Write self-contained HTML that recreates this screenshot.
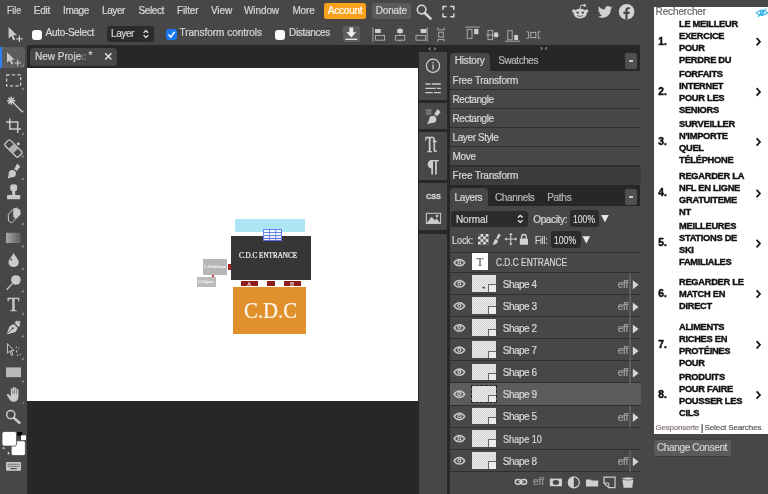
<!DOCTYPE html>
<html><head><meta charset="utf-8">
<style>
*{box-sizing:border-box;margin:0;padding:0}
html,body{width:768px;height:494px;overflow:hidden;background:#474747}
body{position:relative;font-family:"Liberation Sans","DejaVu Sans",sans-serif;font-size:10px;color:#d6d6d6}
.a{position:absolute}
.t{position:absolute;white-space:nowrap;line-height:14px;-webkit-text-stroke:.22px currentColor}
.sep{position:absolute;left:449.5px;width:190.5px;height:1.2px;background:#2e2e2e}
.th{position:absolute;left:472px;width:24px;height:16.6px;background:#e9e9e9;background-image:linear-gradient(45deg,#d4d4d4 25%,transparent 25%,transparent 75%,#d4d4d4 75%),linear-gradient(45deg,#d4d4d4 25%,transparent 25%,transparent 75%,#d4d4d4 75%);background-size:2px 2px;background-position:0 0,1px 1px}
.vm{position:absolute;left:488.3px;width:7.6px;height:7.4px;background:#ececec;border-left:1px solid #666;border-top:1px solid #666}
.in{position:absolute;background:#2b2b2b;border-radius:3px}
</style></head><body>

<!-- workspace dark bg -->
<div class="a" style="left:27px;top:45px;width:613.4px;height:449px;background:#272727;border-radius:3px 0 0 0"></div>
<!-- canvas -->
<div class="a" style="left:27px;top:67.6px;width:391.3px;height:333px;background:#fff"></div>

<!-- canvas artwork -->
<div class="a" style="left:235px;top:218.8px;width:70.2px;height:13px;background:#aee5f4"></div>
<div class="a" style="left:230.8px;top:235.5px;width:80.4px;height:44.6px;background:#363636"></div>
<div class="a" style="left:263px;top:229.2px;width:18.6px;height:12px;background:#fff;background-image:linear-gradient(#5b78f0 1px,transparent 1px),linear-gradient(90deg,#5b78f0 1px,transparent 1px);background-size:6.2px 3px;border-right:1px solid #5b78f0;border-bottom:1px solid #5b78f0;opacity:.92"></div>
<div class="a" style="left:202.7px;top:258.8px;width:24.8px;height:15.8px;background:#b6b6b6"></div>
<div class="a" style="left:228.2px;top:263.5px;width:2.6px;height:6px;background:#a02020"></div>
<div class="a" style="left:212px;top:275.3px;width:2.4px;height:1.4px;background:#c04040"></div>
<div class="a" style="left:196.5px;top:277px;width:19px;height:9.5px;background:#bcbcbc"></div>
<div class="a" style="left:241px;top:280.8px;width:16.6px;height:5.6px;background:#8e1b1b"></div>
<div class="a" style="left:266.8px;top:280.8px;width:7.8px;height:5.6px;background:#8e1b1b"></div>
<div class="a" style="left:283.5px;top:280.8px;width:17px;height:5.6px;background:#8e1b1b"></div>
<div class="a" style="left:232.5px;top:287.2px;width:73.5px;height:46.6px;background:#e0912c"></div>

<!-- menu buttons -->
<div class="a" style="left:324px;top:2.6px;width:42.4px;height:16.6px;background:#f9a11b;border-radius:2.5px"></div>
<div class="a" style="left:372px;top:2.6px;width:39px;height:16.6px;background:#5b5b5b;border-radius:2.5px"></div>

<!-- options bar -->
<div class="a" style="left:32px;top:30px;width:10px;height:10px;background:#fbfbfb;border-radius:3px"></div>
<div class="in" style="left:106.5px;top:26px;width:47.5px;height:16px"></div>
<div class="a" style="left:166px;top:29px;width:11px;height:11px;background:#1877f2;border-radius:3px"></div>
<div class="a" style="left:275.4px;top:30px;width:10px;height:10px;background:#fbfbfb;border-radius:3px"></div>
<div class="a" style="left:343px;top:25.6px;width:16.5px;height:16.2px;background:#5d5d5d;border-radius:2px"></div>

<!-- active tool -->
<div class="a" style="left:0;top:46.8px;width:24.7px;height:21px;background:#5c5c5c;border-radius:0 4px 4px 0"></div>
<div class="a" style="left:0;top:46.8px;width:2.1px;height:21px;background:#2d7ff9"></div>

<!-- doc tab -->
<div class="a" style="left:29.8px;top:47.6px;width:87.5px;height:18.8px;background:#474747;border-radius:3.5px"></div>

<!-- icon column -->
<div class="a" style="left:419.3px;top:51.8px;width:27.6px;height:48.5px;background:#474747"></div>
<div class="a" style="left:419.3px;top:103.2px;width:27.6px;height:26.2px;background:#474747"></div>
<div class="a" style="left:419.3px;top:132px;width:27.6px;height:47.5px;background:#474747"></div>
<div class="a" style="left:419.3px;top:182.7px;width:27.6px;height:47.8px;background:#474747"></div>
<div class="a" style="left:419.3px;top:233.6px;width:27.6px;height:261px;background:#474747"></div>

<!-- history panel -->
<div class="a" style="left:449.6px;top:52.5px;width:40.6px;height:19px;background:#474747;border-radius:4px 4px 0 0"></div>
<div class="a" style="left:449.6px;top:70.8px;width:191.4px;height:114.4px;background:#474747"></div>
<div class="a" style="left:449.6px;top:166.4px;width:191.4px;height:18.8px;background:#3c3c3c"></div>
<div class="a" style="left:625px;top:53px;width:12px;height:16.2px;background:#505050;border-radius:2px"></div>
<div class="a" style="left:629.3px;top:59.8px;width:3.6px;height:2.2px;background:#c8c8c8"></div>
<div class="sep" style="top:89px"></div><div class="sep" style="top:108.1px"></div><div class="sep" style="top:127.2px"></div><div class="sep" style="top:146.3px"></div><div class="sep" style="top:165.4px"></div>

<!-- layers panel -->
<div class="a" style="left:449.6px;top:188px;width:38px;height:19px;background:#474747;border-radius:4px 4px 0 0"></div>
<div class="a" style="left:449.6px;top:206px;width:191.4px;height:288px;background:#474747"></div>
<div class="a" style="left:625px;top:189px;width:12px;height:16.2px;background:#505050;border-radius:2px"></div>
<div class="a" style="left:629.3px;top:195.8px;width:3.6px;height:2.2px;background:#c8c8c8"></div>
<div class="in" style="left:451.2px;top:210.6px;width:77px;height:16.4px"></div>
<div class="in" style="left:569.7px;top:210.4px;width:29.3px;height:16.8px"></div>
<div class="in" style="left:551px;top:230.8px;width:30px;height:17.3px"></div>
<!-- selected row -->
<div class="a" style="left:449.6px;top:383.4px;width:191.4px;height:21.6px;background:#5c5c5c"></div>
<!-- row separators -->
<div class="sep" style="top:251.6px"></div><div class="sep" style="top:271.8px"></div><div class="sep" style="top:293.9px"></div><div class="sep" style="top:316px"></div><div class="sep" style="top:338.1px"></div><div class="sep" style="top:360.2px"></div><div class="sep" style="top:382.3px"></div><div class="sep" style="top:404.8px"></div><div class="sep" style="top:426.6px"></div><div class="sep" style="top:448.8px"></div><div class="sep" style="top:470.9px"></div>
<!-- thumbs -->
<div class="a" style="left:472px;top:253px;width:16.2px;height:16.8px;background:#fff"></div>
<div class="th" style="top:275.2px"></div><div class="vm" style="top:284.4px"></div>
<div class="th" style="top:297.2px"></div><div class="vm" style="top:306.4px"></div>
<div class="th" style="top:319.3px"></div><div class="vm" style="top:328.5px"></div>
<div class="th" style="top:341.4px"></div><div class="vm" style="top:350.6px"></div>
<div class="th" style="top:363.5px"></div><div class="vm" style="top:372.7px"></div>
<div class="th" style="top:385.7px;outline:1px dashed #222;outline-offset:0"></div><div class="vm" style="top:394.9px"></div>
<div class="th" style="top:407.8px"></div><div class="vm" style="top:417px"></div>
<div class="th" style="top:430px"></div><div class="vm" style="top:439.2px"></div>
<div class="th" style="top:452.2px"></div><div class="vm" style="top:461.4px"></div>

<!-- ad -->
<div class="a" style="left:654.4px;top:7px;width:114px;height:426.6px;background:#fff"></div>
<div class="a" style="left:653.5px;top:440px;width:77.3px;height:15.8px;background:#5b5b5b;border-radius:2.5px;box-shadow:0 1px 0 #3b3b3b,0 -1px 0 #404040"></div>

<div class="a" style="left:0;top:0;width:768px;height:494px;will-change:transform">
<div class="t" style='left:6.7px;top:3.6px;font-size:10px;line-height:14px;color:#d6d6d6;transform-origin:0 50%;transform:scaleX(0.874);'>File</div>
<div class="t" style='left:33.7px;top:3.6px;font-size:10px;line-height:14px;color:#d6d6d6;letter-spacing:-0.23px;'>Edit</div>
<div class="t" style='left:63.0px;top:3.6px;font-size:10px;line-height:14px;color:#d6d6d6;letter-spacing:-0.36px;'>Image</div>
<div class="t" style='left:102.0px;top:3.6px;font-size:10px;line-height:14px;color:#d6d6d6;letter-spacing:-0.40px;'>Layer</div>
<div class="t" style='left:138.5px;top:3.6px;font-size:10px;line-height:14px;color:#d6d6d6;letter-spacing:-0.38px;'>Select</div>
<div class="t" style='left:177.0px;top:3.6px;font-size:10px;line-height:14px;color:#d6d6d6;letter-spacing:-0.12px;'>Filter</div>
<div class="t" style='left:211.0px;top:3.6px;font-size:10px;line-height:14px;color:#d6d6d6;letter-spacing:-0.12px;'>View</div>
<div class="t" style='left:244.0px;top:3.6px;font-size:10px;line-height:14px;color:#d6d6d6;letter-spacing:-0.10px;'>Window</div>
<div class="t" style='left:292.4px;top:3.6px;font-size:10px;line-height:14px;color:#d6d6d6;letter-spacing:-0.15px;'>More</div>
<div class="t" style='left:327.8px;top:3.6px;font-size:10px;line-height:14px;color:#ffffff;letter-spacing:-0.22px;'>Account</div>
<div class="t" style='left:375.7px;top:3.6px;font-size:10px;line-height:14px;color:#d6d6d6;letter-spacing:-0.16px;'>Donate</div>
<div class="t" style='left:45.5px;top:26.0px;font-size:10px;line-height:14px;color:#d6d6d6;letter-spacing:-0.29px;'>Auto-Select</div>
<div class="t" style='left:111.0px;top:27.0px;font-size:10px;line-height:14px;color:#d6d6d6;letter-spacing:-0.40px;'>Layer</div>
<div class="t" style='left:179.5px;top:26.0px;font-size:10px;line-height:14px;color:#d6d6d6;letter-spacing:-0.03px;'>Transform controls</div>
<div class="t" style='left:289.0px;top:26.0px;font-size:10px;line-height:14px;color:#d6d6d6;letter-spacing:-0.32px;'>Distances</div>
<div class="t" style='left:35.0px;top:49.5px;font-size:10px;line-height:14px;color:#d6d6d6;letter-spacing:0.01px;'>New Proje</div>
<div class="t" style='left:81.2px;top:49.5px;font-size:10px;line-height:14px;color:#7c7c7c;letter-spacing:-0.20px;'>c</div>
<div class="t" style='left:88.5px;top:48.5px;font-size:10px;line-height:14px;color:#d6d6d6;letter-spacing:0.09px;'>*</div>
<div class="t" style='left:454.7px;top:54.4px;font-size:10px;line-height:14px;color:#d6d6d6;letter-spacing:-0.16px;'>History</div>
<div class="t" style='left:498.3px;top:54.4px;font-size:10px;line-height:14px;color:#b4b4b4;letter-spacing:-0.46px;'>Swatches</div>
<div class="t" style='left:452.5px;top:73.8px;font-size:10px;line-height:14px;color:#d6d6d6;letter-spacing:-0.20px;'>Free Transform</div>
<div class="t" style='left:452.5px;top:92.9px;font-size:10px;line-height:14px;color:#d6d6d6;letter-spacing:-0.43px;'>Rectangle</div>
<div class="t" style='left:452.5px;top:112.0px;font-size:10px;line-height:14px;color:#d6d6d6;letter-spacing:-0.43px;'>Rectangle</div>
<div class="t" style='left:452.5px;top:131.1px;font-size:10px;line-height:14px;color:#d6d6d6;letter-spacing:-0.38px;'>Layer Style</div>
<div class="t" style='left:452.5px;top:150.0px;font-size:10px;line-height:14px;color:#d6d6d6;letter-spacing:-0.29px;'>Move</div>
<div class="t" style='left:452.5px;top:169.3px;font-size:10px;line-height:14px;color:#d6d6d6;letter-spacing:-0.20px;'>Free Transform</div>
<div class="t" style='left:454.6px;top:190.5px;font-size:10px;line-height:14px;color:#d6d6d6;letter-spacing:-0.40px;'>Layers</div>
<div class="t" style='left:495.0px;top:190.5px;font-size:10px;line-height:14px;color:#b4b4b4;letter-spacing:-0.35px;'>Channels</div>
<div class="t" style='left:547.2px;top:190.5px;font-size:10px;line-height:14px;color:#b4b4b4;letter-spacing:-0.28px;'>Paths</div>
<div class="t" style='left:455.9px;top:212.5px;font-size:10px;line-height:14px;color:#d6d6d6;letter-spacing:-0.07px;'>Normal</div>
<div class="t" style='left:533.2px;top:212.5px;font-size:10px;line-height:14px;color:#d6d6d6;letter-spacing:-0.34px;'>Opacity:</div>
<div class="t" style='left:572.7px;top:212.5px;font-size:10px;line-height:14px;color:#d6d6d6;transform-origin:0 50%;transform:scaleX(0.864);'>100%</div>
<div class="t" style='left:451.6px;top:233.6px;font-size:10px;line-height:14px;color:#d6d6d6;transform-origin:0 50%;transform:scaleX(0.891);'>Lock:</div>
<div class="t" style='left:535.3px;top:233.5px;font-size:10px;line-height:14px;color:#d6d6d6;transform-origin:0 50%;transform:scaleX(0.816);'>Fill:</div>
<div class="t" style='left:554.4px;top:233.5px;font-size:10px;line-height:14px;color:#d6d6d6;transform-origin:0 50%;transform:scaleX(0.864);'>100%</div>
<div class="t" style='left:495.6px;top:255.7px;font-size:10px;line-height:14px;color:#d6d6d6;transform-origin:0 50%;transform:scaleX(0.837);'>C.D.C ENTRANCE</div>
<div class="t" style='left:502.7px;top:277.8px;font-size:10px;line-height:14px;color:#d6d6d6;letter-spacing:-0.48px;'>Shape 4</div>
<div class="t" style='left:617.8px;top:277.9px;font-size:10px;line-height:14px;color:#a4a4a4;letter-spacing:-0.25px;'>eff</div>
<div class="t" style='left:502.7px;top:299.9px;font-size:10px;line-height:14px;color:#d6d6d6;letter-spacing:-0.48px;'>Shape 3</div>
<div class="t" style='left:617.8px;top:300.1px;font-size:10px;line-height:14px;color:#a4a4a4;letter-spacing:-0.25px;'>eff</div>
<div class="t" style='left:502.7px;top:321.9px;font-size:10px;line-height:14px;color:#d6d6d6;letter-spacing:-0.48px;'>Shape 2</div>
<div class="t" style='left:617.8px;top:322.1px;font-size:10px;line-height:14px;color:#a4a4a4;letter-spacing:-0.25px;'>eff</div>
<div class="t" style='left:502.7px;top:344.1px;font-size:10px;line-height:14px;color:#d6d6d6;letter-spacing:-0.48px;'>Shape 7</div>
<div class="t" style='left:617.8px;top:344.2px;font-size:10px;line-height:14px;color:#a4a4a4;letter-spacing:-0.25px;'>eff</div>
<div class="t" style='left:502.7px;top:366.2px;font-size:10px;line-height:14px;color:#d6d6d6;letter-spacing:-0.48px;'>Shape 6</div>
<div class="t" style='left:617.8px;top:366.4px;font-size:10px;line-height:14px;color:#a4a4a4;letter-spacing:-0.25px;'>eff</div>
<div class="t" style='left:502.7px;top:388.2px;font-size:10px;line-height:14px;color:#d6d6d6;letter-spacing:-0.48px;'>Shape 9</div>
<div class="t" style='left:502.7px;top:410.4px;font-size:10px;line-height:14px;color:#d6d6d6;letter-spacing:-0.48px;'>Shape 5</div>
<div class="t" style='left:617.8px;top:410.6px;font-size:10px;line-height:14px;color:#a4a4a4;letter-spacing:-0.25px;'>eff</div>
<div class="t" style='left:502.7px;top:432.6px;font-size:10px;line-height:14px;color:#d6d6d6;transform-origin:0 50%;transform:scaleX(0.906);'>Shape 10</div>
<div class="t" style='left:502.7px;top:454.8px;font-size:10px;line-height:14px;color:#d6d6d6;letter-spacing:-0.48px;'>Shape 8</div>
<div class="t" style='left:617.8px;top:454.9px;font-size:10px;line-height:14px;color:#a4a4a4;letter-spacing:-0.25px;'>eff</div>
<div class="t" style='left:533.0px;top:475.0px;font-size:10px;line-height:14px;color:#9a9a9a;letter-spacing:0.02px;'>eff</div>
<div class="t" style='left:657.0px;top:440.6px;font-size:10px;line-height:14px;color:#cfcfcf;letter-spacing:-0.36px;'>Change Consent</div>
<div class="t" style='left:239.3px;top:249.4px;font-size:8.4px;line-height:14px;color:#f4f4f4;font-family:"Liberation Serif","DejaVu Serif",serif;transform-origin:0 50%;transform:scaleX(0.852);'>C.D.C ENTRANCE</div>
<div class="t" style='left:243.8px;top:303.5px;font-size:23px;line-height:14px;color:#fdf6ec;font-family:"Liberation Serif","DejaVu Serif",serif;transform-origin:0 50%;transform:scaleX(0.905);'>C.D.C</div>
<div class="t" style='left:247.0px;top:276.6px;font-size:6px;line-height:14px;color:#e9c8c8;font-family:"Liberation Serif","DejaVu Serif",serif;transform-origin:0 50%;transform:scaleX(1.036);'>A</div>
<div class="t" style='left:290.0px;top:276.6px;font-size:6px;line-height:14px;color:#e9c8c8;font-family:"Liberation Serif","DejaVu Serif",serif;transform-origin:0 50%;transform:scaleX(0.996);'>B</div>
<div class="t" style='left:204.0px;top:260.0px;font-size:3.6px;line-height:14px;color:#e8e8e8;font-family:"Liberation Serif","DejaVu Serif",serif;transform-origin:0 50%;transform:scaleX(1.113);'>C.D ballroom</div>
<div class="t" style='left:198.0px;top:275.0px;font-size:3.2px;line-height:14px;color:#e8e8e8;font-family:"Liberation Serif","DejaVu Serif",serif;transform-origin:0 50%;transform:scaleX(1.042);'>C.D figures</div>
<div class="t" style='left:655.6px;top:5.0px;font-size:10px;line-height:14px;color:#6a6a6a;letter-spacing:-0.13px;'>Rechercher</div>
<div class="t" style='left:679.0px;top:16.7px;font-size:9.3px;line-height:14px;color:#111;font-weight:bold;-webkit-text-stroke:.4px #111;letter-spacing:-.28px;'>LE MEILLEUR</div>
<div class="t" style='left:679.0px;top:29.0px;font-size:9.3px;line-height:14px;color:#111;font-weight:bold;-webkit-text-stroke:.4px #111;letter-spacing:-.28px;'>EXERCICE</div>
<div class="t" style='left:679.0px;top:40.6px;font-size:9.3px;line-height:14px;color:#111;font-weight:bold;-webkit-text-stroke:.4px #111;letter-spacing:-.28px;'>POUR</div>
<div class="t" style='left:679.0px;top:52.7px;font-size:9.3px;line-height:14px;color:#111;font-weight:bold;-webkit-text-stroke:.4px #111;letter-spacing:-.28px;'>PERDRE DU</div>
<div class="t" style='left:679.0px;top:66.9px;font-size:9.3px;line-height:14px;color:#111;font-weight:bold;-webkit-text-stroke:.4px #111;letter-spacing:-.28px;'>FORFAITS</div>
<div class="t" style='left:679.0px;top:79.0px;font-size:9.3px;line-height:14px;color:#111;font-weight:bold;-webkit-text-stroke:.4px #111;letter-spacing:-.28px;'>INTERNET</div>
<div class="t" style='left:679.0px;top:90.9px;font-size:9.3px;line-height:14px;color:#111;font-weight:bold;-webkit-text-stroke:.4px #111;letter-spacing:-.28px;'>POUR LES</div>
<div class="t" style='left:679.0px;top:102.7px;font-size:9.3px;line-height:14px;color:#111;font-weight:bold;-webkit-text-stroke:.4px #111;letter-spacing:-.28px;'>SENIORS</div>
<div class="t" style='left:679.0px;top:117.0px;font-size:9.3px;line-height:14px;color:#111;font-weight:bold;-webkit-text-stroke:.4px #111;letter-spacing:-.28px;'>SURVEILLER</div>
<div class="t" style='left:679.0px;top:129.3px;font-size:9.3px;line-height:14px;color:#111;font-weight:bold;-webkit-text-stroke:.4px #111;letter-spacing:-.28px;'>N&#x27;IMPORTE</div>
<div class="t" style='left:679.0px;top:141.4px;font-size:9.3px;line-height:14px;color:#111;font-weight:bold;-webkit-text-stroke:.4px #111;letter-spacing:-.28px;'>QUEL</div>
<div class="t" style='left:679.0px;top:153.0px;font-size:9.3px;line-height:14px;color:#111;font-weight:bold;-webkit-text-stroke:.4px #111;letter-spacing:-.28px;'>TÉLÉPHONE</div>
<div class="t" style='left:679.0px;top:168.5px;font-size:9.3px;line-height:14px;color:#111;font-weight:bold;-webkit-text-stroke:.4px #111;letter-spacing:-.28px;'>REGARDER LA</div>
<div class="t" style='left:679.0px;top:180.6px;font-size:9.3px;line-height:14px;color:#111;font-weight:bold;-webkit-text-stroke:.4px #111;letter-spacing:-.28px;'>NFL EN LIGNE</div>
<div class="t" style='left:679.0px;top:192.5px;font-size:9.3px;line-height:14px;color:#111;font-weight:bold;-webkit-text-stroke:.4px #111;letter-spacing:-.28px;'>GRATUITEME</div>
<div class="t" style='left:679.0px;top:204.8px;font-size:9.3px;line-height:14px;color:#111;font-weight:bold;-webkit-text-stroke:.4px #111;letter-spacing:-.28px;'>NT</div>
<div class="t" style='left:679.0px;top:218.6px;font-size:9.3px;line-height:14px;color:#111;font-weight:bold;-webkit-text-stroke:.4px #111;letter-spacing:-.28px;'>MEILLEURES</div>
<div class="t" style='left:679.0px;top:230.9px;font-size:9.3px;line-height:14px;color:#111;font-weight:bold;-webkit-text-stroke:.4px #111;letter-spacing:-.28px;'>STATIONS DE</div>
<div class="t" style='left:679.0px;top:242.7px;font-size:9.3px;line-height:14px;color:#111;font-weight:bold;-webkit-text-stroke:.4px #111;letter-spacing:-.28px;'>SKI</div>
<div class="t" style='left:679.0px;top:254.6px;font-size:9.3px;line-height:14px;color:#111;font-weight:bold;-webkit-text-stroke:.4px #111;letter-spacing:-.28px;'>FAMILIALES</div>
<div class="t" style='left:679.0px;top:274.8px;font-size:9.3px;line-height:14px;color:#111;font-weight:bold;-webkit-text-stroke:.4px #111;letter-spacing:-.28px;'>REGARDER LE</div>
<div class="t" style='left:679.0px;top:287.0px;font-size:9.3px;line-height:14px;color:#111;font-weight:bold;-webkit-text-stroke:.4px #111;letter-spacing:-.28px;'>MATCH EN</div>
<div class="t" style='left:679.0px;top:299.0px;font-size:9.3px;line-height:14px;color:#111;font-weight:bold;-webkit-text-stroke:.4px #111;letter-spacing:-.28px;'>DIRECT</div>
<div class="t" style='left:679.0px;top:319.8px;font-size:9.3px;line-height:14px;color:#111;font-weight:bold;-webkit-text-stroke:.4px #111;letter-spacing:-.28px;'>ALIMENTS</div>
<div class="t" style='left:679.0px;top:331.7px;font-size:9.3px;line-height:14px;color:#111;font-weight:bold;-webkit-text-stroke:.4px #111;letter-spacing:-.28px;'>RICHES EN</div>
<div class="t" style='left:679.0px;top:344.0px;font-size:9.3px;line-height:14px;color:#111;font-weight:bold;-webkit-text-stroke:.4px #111;letter-spacing:-.28px;'>PROTÉINES</div>
<div class="t" style='left:679.0px;top:355.9px;font-size:9.3px;line-height:14px;color:#111;font-weight:bold;-webkit-text-stroke:.4px #111;letter-spacing:-.28px;'>POUR</div>
<div class="t" style='left:679.0px;top:370.0px;font-size:9.3px;line-height:14px;color:#111;font-weight:bold;-webkit-text-stroke:.4px #111;letter-spacing:-.28px;'>PRODUITS</div>
<div class="t" style='left:679.0px;top:382.3px;font-size:9.3px;line-height:14px;color:#111;font-weight:bold;-webkit-text-stroke:.4px #111;letter-spacing:-.28px;'>POUR FAIRE</div>
<div class="t" style='left:679.0px;top:394.3px;font-size:9.3px;line-height:14px;color:#111;font-weight:bold;-webkit-text-stroke:.4px #111;letter-spacing:-.28px;'>POUSSER LES</div>
<div class="t" style='left:679.0px;top:406.4px;font-size:9.3px;line-height:14px;color:#111;font-weight:bold;-webkit-text-stroke:.4px #111;letter-spacing:-.28px;'>CILS</div>
<div class="t" style='left:658.3px;top:34.5px;font-size:10.2px;line-height:14px;color:#111;font-weight:bold;-webkit-text-stroke:.45px #111;'>1.</div>
<div class="t" style='left:658.3px;top:84.7px;font-size:10.2px;line-height:14px;color:#111;font-weight:bold;-webkit-text-stroke:.45px #111;'>2.</div>
<div class="t" style='left:658.3px;top:134.8px;font-size:10.2px;line-height:14px;color:#111;font-weight:bold;-webkit-text-stroke:.45px #111;'>3.</div>
<div class="t" style='left:658.3px;top:186.3px;font-size:10.2px;line-height:14px;color:#111;font-weight:bold;-webkit-text-stroke:.45px #111;'>4.</div>
<div class="t" style='left:658.3px;top:236.4px;font-size:10.2px;line-height:14px;color:#111;font-weight:bold;-webkit-text-stroke:.45px #111;'>5.</div>
<div class="t" style='left:658.3px;top:286.8px;font-size:10.2px;line-height:14px;color:#111;font-weight:bold;-webkit-text-stroke:.45px #111;'>6.</div>
<div class="t" style='left:658.3px;top:337.6px;font-size:10.2px;line-height:14px;color:#111;font-weight:bold;-webkit-text-stroke:.45px #111;'>7.</div>
<div class="t" style='left:658.3px;top:387.8px;font-size:10.2px;line-height:14px;color:#111;font-weight:bold;-webkit-text-stroke:.45px #111;'>8.</div>
<div class="t" style='left:655.6px;top:421.3px;font-size:8px;line-height:14px;color:#857878;letter-spacing:-0.22px;'>Gesponserte</div>
<div class="t" style='left:701.0px;top:421.0px;font-size:9px;line-height:14px;color:#333;letter-spacing:-0.34px;'>|</div>
<div class="t" style='left:704.5px;top:421.3px;font-size:8px;line-height:14px;color:#5c5c5c;letter-spacing:-0.09px;'>Select Searches</div>
</div>

<svg class="a" style="left:0;top:0" width="768" height="494" viewBox="0 0 768 494">
<g fill="#c9c9c9" stroke="none">
<!-- options bar move arrow -->
<path d="M8.6 27 L8.6 38.6 L11.4 36 L13.3 40.6 L15.2 39.8 L13.2 35.3 L17 35.3 Z"/>
<path d="M16.2 38.2h2.6v-2.7h1.2v2.7h2.7v1.2h-2.7v2.7h-1.2v-2.7h-2.6z"/>
<!-- move tool active -->
<path d="M7 52.2 L7 62.8 L9.6 60.4 L11.4 64.6 L13.2 63.8 L11.4 59.7 L14.6 59.7 Z"/>
<path d="M14.6 62.5h2.6v-2.7h1.1v2.7h2.6v1.1h-2.6v2.7h-1.1v-2.7h-2.6z"/>
</g>
<g fill="#aaaaaa">
<path d="M23.6 64.6v2.2h-2.2z"/>
<path d="M23.6 87.5v2.2h-2.2z"/>
<path d="M23.6 110v2.2h-2.2z"/>
<path d="M23.6 132.5v2.2h-2.2z"/>
<path d="M23.6 155v2.2h-2.2z"/>
<path d="M23.6 177.5v2.2h-2.2z"/>
<path d="M23.6 222.5v2.2h-2.2z"/>
<path d="M23.6 245v2.2h-2.2z"/>
<path d="M23.6 267.5v2.2h-2.2z"/>
<path d="M23.6 290v2.2h-2.2z"/>
<path d="M23.6 312.5v2.2h-2.2z"/>
<path d="M23.6 335v2.2h-2.2z"/>
<path d="M23.6 357.5v2.2h-2.2z"/>
<path d="M23.6 380v2.2h-2.2z"/>
<path d="M23.6 402v1.6h-1.6z"/>
</g>
<!-- marquee -->
<rect x="6.6" y="74.9" width="14" height="11" fill="none" stroke="#c9c9c9" stroke-width="1.3" stroke-dasharray="3.2 2.2"/>
<!-- wand -->
<g stroke="#c9c9c9" fill="none">
<path d="M12 101.5 L22.4 112" stroke-width="1.3"/>
<path d="M11.2 96.6v8.2M7.1 100.7h8.2M8.3 97.8l5.8 5.8M14.1 97.8l-5.8 5.8" stroke-width="1.5"/>
</g>
<!-- crop -->
<g stroke="#c9c9c9" fill="none" stroke-width="1.5">
<path d="M9.8 118.4V129H21M6 122h11.7v11"/>
</g>
<!-- healing bandage -->
<g transform="translate(13.4 148.6) rotate(45)">
<rect x="-9.4" y="-3.8" width="18.8" height="7.6" rx="1.6" fill="none" stroke="#c9c9c9" stroke-width="1.3"/>
<rect x="-3.2" y="-3.8" width="6.4" height="7.6" fill="#b0b0b0"/>
</g>
<circle cx="18.3" cy="143.8" r="1.4" fill="#d8d8d8"/>
<!-- brush -->
<g fill="#c9c9c9">
<path d="M17.200 163.600 L20.300 166.400 L16.800 171 L14.200 169 Z"/>
<circle cx="12.300" cy="173.600" r="3.600"/>
<path d="M7.600 178.600 L9.800 171 L14.900 176.200 Z"/>
</g>
<!-- stamp -->
<g fill="#c9c9c9">
<path d="M10.2 186.6 a3.5 2.4 0 0 1 7 0 v2.6 a3.5 2.2 0 0 1 -2 2 v3.8 h-3 v-3.8 a3.5 2.2 0 0 1 -2 -2 z"/>
<rect x="7" y="195" width="13.2" height="4.3" rx=".6"/>
</g>
<!-- eraser -->
<g>
<path d="M13 209.2 L8.2 214.8 L8.6 221 L11.6 223 L20 214.6 L20 210.4 L16.4 208 Z" fill="none" stroke="#c9c9c9" stroke-width="1"/>
<path d="M13.2 209.4 L16.4 208 L20 210.4 L20 214.6 L15.6 219 L13.2 216.4 Z" fill="#c9c9c9"/>
</g>
<!-- gradient -->
<defs><linearGradient id="gr" x1="0" y1="0" x2="1" y2="0"><stop offset="0" stop-color="#a8a8a8"/><stop offset="1" stop-color="#5e5e5e"/></linearGradient></defs>
<rect x="6" y="232.8" width="14.6" height="10.2" fill="url(#gr)"/>
<!-- blur drop -->
<path d="M13.6 253 C15.5 256.8 18.9 259.4 18.9 262.6 A5.3 5.1 0 0 1 8.4 262.6 C8.4 259.4 11.8 256.8 13.6 253 Z" fill="#c9c9c9"/>
<circle cx="11.2" cy="259.6" r="1" fill="#555"/>
<!-- dodge -->
<circle cx="15.9" cy="280" r="4.8" fill="#c9c9c9"/>
<path d="M12.6 283.4 L6.6 289.8" stroke="#c9c9c9" stroke-width="1.3"/>
<!-- T -->
<text x="13.4" y="311" text-anchor="middle" font-family='"Liberation Serif","DejaVu Serif",serif' font-size="19.4" fill="#c9c9c9" stroke="#c9c9c9" stroke-width=".45">T</text>
<!-- pen -->
<g fill="#c9c9c9">
<path d="M6.500 334.400 L9.600 326.200 L13.800 324 L17.800 328 L15.600 332 Z"/>
<path d="M14.800 323 L16.200 320.400 L17.800 321.800 L19 320.600 L20.600 322.600 L19.300 323.800 L20.400 325.200 L18.600 327 Z"/>
</g>
<path d="M7 333.900 L12.200 328.800" stroke="#474747" stroke-width=".8"/>
<circle cx="12.800" cy="328.300" r="1" fill="#474747"/>
<!-- path select -->
<path d="M7.4 343.6 V353.2 L9.8 351 L11.6 355.4 L12.9 354.8 L11.2 350.6 L14 350.6 Z" fill="none" stroke="#c9c9c9" stroke-width="1"/>
<g fill="#b0b0b0"><rect x="15.6" y="346.4" width="1.4" height="1.4"/><rect x="18" y="347.6" width="1.2" height="1.2"/><rect x="16" y="350.2" width="1.2" height="2.4"/><rect x="17" y="354.4" width="1.2" height="1.6"/><rect x="19.6" y="354" width="1.2" height="1.2"/></g>
<!-- rectangle -->
<rect x="6" y="367.4" width="15" height="9.8" fill="#b9b9b9"/>
<!-- hand -->
<path d="M10.800 395 V389.400 a.95 .95 0 0 1 1.900 0 V388 a.95 .95 0 0 1 1.900 0 V388.400 a.95 .95 0 0 1 1.900 0 V390 a.95 .95 0 0 1 1.900 0 V396.400 C18.400 399.600 16.600 401.800 13.600 401.800 C11.400 401.800 10.200 400.600 9.200 398.800 L7 395.200 C6.500 394.100 7.800 393.500 8.600 394.300 L10.800 396.600 Z" fill="#cbcbcb"/>
<path d="M12.700 389.600V394M14.600 388.600V394M16.500 389.400V394" stroke="#474747" stroke-width=".5"/>
<!-- zoom -->
<circle cx="10.8" cy="414.6" r="4.1" fill="none" stroke="#c9c9c9" stroke-width="1.5"/>
<path d="M14 418 L19.4 422.8" stroke="#c9c9c9" stroke-width="2.6" stroke-linecap="round"/>
<!-- colors -->
<rect x="11.2" y="440.8" width="14.2" height="14.7" rx="2" fill="#fff" stroke="#474747" stroke-width=".8"/>
<rect x="2" y="431.5" width="14.6" height="14.6" rx="2" fill="#fff" stroke="#474747" stroke-width=".8"/>
<rect x="17.2" y="432" width="5" height="3.8" fill="#000"/>
<rect x="21" y="435.3" width="5" height="4.8" fill="#fff"/>
<path d="M2 448.8 L5.2 448.8 L3.6 446.8Z M7.8 451.4 L7.8 455 L10 453.2Z" fill="#d0d0d0"/>
<!-- keyboard -->
<rect x="6" y="462" width="15" height="8.7" rx=".8" fill="#c9c9c9"/>
<path d="M7.6 464.2h12M7.6 466.3h12" stroke="#444" stroke-width="1" stroke-dasharray="1.2 .7"/>
<path d="M10.4 468.6h6.4" stroke="#444" stroke-width="1.1"/>

<!-- doc tab close -->
<path d="M105.2 53.2 L111.4 59.6 M111.4 53.2 L105.2 59.6" stroke="#e4e4e4" stroke-width="1.4" fill="none"/>
<!-- select arrows -->
<path d="M143.600 32.700 L145.900 30.600 L148.200 32.700 M143.600 35.300 L145.900 37.400 L148.200 35.300" stroke="#ececec" stroke-width="1.300" fill="none"/>
<path d="M518 217.6 L520.3 215.5 L522.6 217.6 M518 220.300 L520.3 222.400 L522.6 220.300" stroke="#ececec" stroke-width="1.300" fill="none"/>
<!-- checkbox tick -->
<path d="M168.500 34.600 L170.800 37.100 L174.700 31.700" stroke="#fff" stroke-width="1.500" fill="none"/>
<!-- download -->
<path d="M349.4 27.6h3.8v4.6h3l-4.9 5.2 -4.9-5.2h3z" fill="#f0f0f0"/>
<rect x="345.4" y="38.6" width="11.8" height="1.4" fill="#e4e4e4"/>
<!-- align icons -->
<g fill="none" stroke="#a9a9a9" stroke-width="1">
<path d="M372.9 27.4V41.6"/><rect x="375.5" y="35.4" width="9" height="4.8"/>
<path d="M400 27.4V29M400 33V35.4M400 40.2V41.8"/><rect x="395.4" y="35.4" width="9.4" height="4.8"/>
<path d="M427.2 27.4V41.6"/><rect x="416" y="35.4" width="9.6" height="4.8"/>
<path d="M437.8 27.4v2.4h6.4v-2.4M437.8 41.8v-2.4h6.4v2.4"/><rect x="438.6" y="32.2" width="4.8" height="4.8"/>
<path d="M465 27.1H479.8"/><rect x="467.2" y="29.4" width="4.8" height="9"/>
<path d="M486 35H499.4"/><rect x="488" y="30.4" width="4.6" height="9.2"/>
<path d="M505 41.2H520"/><rect x="507.8" y="30.8" width="4.4" height="9"/>
<path d="M526.4 31.8h2.2v6.4h-2.2M540.4 31.8h-2.2v6.4h2.2"/><rect x="530.8" y="32.4" width="5" height="5.2"/>
</g>
<g fill="#cfcfcf">
<rect x="375" y="29" width="5.8" height="4"/><rect x="397.2" y="29" width="5.6" height="4"/><rect x="420.6" y="29" width="5.8" height="4"/>
<rect x="474.2" y="29" width="4.2" height="5.2"/><rect x="494.2" y="32.4" width="3.8" height="4.8"/><rect x="514.2" y="35" width="3.8" height="5"/>
</g>
<!-- search + fullscreen -->
<circle cx="421.6" cy="9.6" r="4.3" fill="none" stroke="#d6d6d6" stroke-width="1.6"/>
<path d="M424.8 13 L430.6 18.6" stroke="#d6d6d6" stroke-width="2.6" stroke-linecap="round"/>
<path d="M443 10v-3.4h3.6M450.2 6.6h3.6V10M453.8 13.4v3.4h-3.6M446.6 16.8H443v-3.4" fill="none" stroke="#d6d6d6" stroke-width="1.5"/>
<!-- reddit -->
<g fill="#d2d2d2">
<ellipse cx="580.2" cy="13.6" rx="6.6" ry="4.8"/>
<circle cx="573.8" cy="11" r="1.7"/><circle cx="586.6" cy="11" r="1.7"/>
<circle cx="584.6" cy="5.4" r="1.3"/>
<path d="M579.9 9 L581 5 L584.4 5.6" fill="none" stroke="#d2d2d2" stroke-width=".9"/>
</g>
<circle cx="577.6" cy="12.6" r="1.2" fill="#474747"/><circle cx="582.8" cy="12.6" r="1.2" fill="#474747"/>
<path d="M577.4 15.6 Q580.2 17.4 583 15.6" fill="none" stroke="#474747" stroke-width=".8"/>
<!-- twitter -->
<path d="M612.4 7.4 c-.5 .3 -1.100 .4 -1.700 .5 c.6 -.4 1.100 -1 1.300 -1.700 c-.6 .3 -1.200 .6 -1.900 .7 c-.5 -.6 -1.300 -1 -2.200 -1 c-1.700 0 -3 1.400 -3 3 c0 .2 0 .5 .1 .7 c-2.500 -.1 -4.700 -1.300 -6.200 -3.100 c-.3 .4 -.4 1 -.4 1.500 c0 1 .5 2 1.300 2.500 c-.5 0 -1 -.1 -1.400 -.4 c0 1.500 1 2.700 2.400 3 c-.4 .1 -.9 .1 -1.300 0 c.4 1.200 1.500 2.100 2.800 2.100 c-1.200 1 -2.800 1.400 -4.400 1.300 c1.300 .9 2.900 1.300 4.600 1.300 c5.500 0 8.500 -4.600 8.500 -8.500 v-.4 c.6 -.4 1.100 -1 1.500 -1.500 z" fill="#d2d2d2"/>
<!-- facebook -->
<circle cx="626.6" cy="11.8" r="7.8" fill="#d2d2d2"/>
<path d="M627.6 19.6 v-5.600 h1.900 l.3 -2.200 h-2.200 v-1.400 c0 -.6 .2 -1.100 1.100 -1.100 h1.200 v-2 c-.2 0 -.9 -.1 -1.700 -.1 c-1.700 0 -2.900 1 -2.900 3 v1.600 h-1.900 v2.200 h1.900 v5.600 z" fill="#474747"/>

<!-- panel collapse markers -->
<path d="M430.6 47.6 L428.8 48.9 L430.6 50.2 M433.8 47.6 L435.6 48.9 L433.8 50.2" fill="none" stroke="#b0b0b0" stroke-width=".9"/>
<path d="M540.6 47.2 L542.4 48.5 L540.6 49.8 M547 47.2 L545.2 48.5 L547 49.8" fill="none" stroke="#b0b0b0" stroke-width=".9"/>

<!-- icon column -->
<circle cx="433" cy="65.8" r="6.6" fill="none" stroke="#d0d0d0" stroke-width="1.2"/>
<rect x="432.4" y="64.6" width="1.3" height="5" fill="#d0d0d0"/><rect x="432.4" y="62" width="1.3" height="1.4" fill="#d0d0d0"/>
<g stroke="#c9c9c9" stroke-width="1.3"><path d="M425.4 84h15.400M425.400 88.300h15.400M425.400 92.600h15.400"/></g>
<g fill="#474747"><rect x="430.400" y="83" width="1.200" height="2"/><rect x="435.800" y="87.300" width="1.200" height="2"/><rect x="432.600" y="91.600" width="1.200" height="2"/></g>
<!-- brush preset -->
<g fill="#cdcdcd">
<path d="M437.5 109.1 L440.7 112.1 L437.1 116.2 L434.2 114.2 Z"/>
<circle cx="432.8" cy="119.300" r="3.500"/>
<path d="M427.200 124.300 L430.400 116.800 L435.200 122 Z"/>
</g>
<rect x="425.700" y="109.400" width="5.700" height="5.200" fill="#8a8a8a"/>
<path d="M425.700 111.100h5.700M425.700 112.900h5.700" stroke="#474747" stroke-width=".7"/>
<!-- Tt, pilcrow, css -->
<text transform="translate(425.300 152.200) scale(.64 1)" font-family='"Liberation Serif","DejaVu Serif",serif' font-size="22.500" fill="#cdcdcd" stroke="#cdcdcd" stroke-width=".5" letter-spacing="-2.200">Tt</text>
<g fill="#cdcdcd">
<path d="M432 160 A4.300 4.300 0 0 0 432 168.600 Z"/>
<rect x="431.300" y="160" width="1.700" height="14.500"/><rect x="435.100" y="160" width="1.700" height="14.500"/>
<rect x="430.500" y="160" width="8.300" height="1.400"/>
</g>
<text x="425.900" y="198.600" font-family='"Liberation Sans","DejaVu Sans",sans-serif' font-size="8" font-weight="bold" fill="#cdcdcd" stroke="#cdcdcd" stroke-width=".4" textLength="15" lengthAdjust="spacingAndGlyphs">CSS</text>
<!-- image icon -->
<rect x="426.300" y="213.300" width="14.300" height="10.100" fill="none" stroke="#cdcdcd" stroke-width="1"/>
<path d="M426.500 223.200 L431.600 216.800 L434.800 220.200 L436.600 218.600 L440.400 223.200 Z" fill="#cdcdcd"/>
<circle cx="437" cy="216" r="1.300" fill="#cdcdcd"/>

<!-- lock icons -->
<g fill="#d0d0d0">
<rect x="478" y="234" width="10.400" height="10.400" fill="#e4e4e4"/>
</g>
<g fill="#555"><rect x="478" y="234" width="2.600" height="2.600"/><rect x="483.200" y="234" width="2.600" height="2.600"/><rect x="480.600" y="236.600" width="2.600" height="2.600"/><rect x="485.800" y="236.600" width="2.600" height="2.600"/><rect x="478" y="239.200" width="2.600" height="2.600"/><rect x="483.200" y="239.200" width="2.600" height="2.600"/><rect x="480.600" y="241.800" width="2.600" height="2.600"/><rect x="485.800" y="241.800" width="2.600" height="2.600"/></g>
<g fill="#d4d4d4">
<path d="M498.400 233.400 L500.800 235 L498 239.600 L496.200 238.400 Z"/>
<path d="M495.800 239 L497.800 240.400 C498 243 495.800 244.600 492.600 244.800 C494 243.400 493.400 240 495.800 239 Z"/>
</g>
<path d="M510.800 233.600v11M505.300 239.100h11" stroke="#d4d4d4" stroke-width="1"/>
<path d="M510.800 232.800l1.700 2.100h-3.400zM510.800 245.400l1.700-2.100h-3.400zM504.500 239.100l2.100-1.700v3.400zM517.100 239.100l-2.100-1.700v3.400z" fill="#d4d4d4"/>
<rect x="519.800" y="238.600" width="8.200" height="6.200" rx=".8" fill="#d4d4d4"/>
<path d="M521.600 238.800v-2a2.300 2.300 0 0 1 4.600 0v2" fill="none" stroke="#d4d4d4" stroke-width="1.300"/>
</g>
<!-- dropdown triangles -->
<path d="M601 215h7.800l-3.900 7.200z" fill="#e8e8e8"/>
<path d="M582.400 236.200h7.800l-3.900 7.200z" fill="#e8e8e8"/>
<path d="M454.100 262.6 C456.600 258.3 462.200 258.3 464.700 262.6 C462.200 266.9 456.600 266.9 454.100 262.6 Z" fill="none" stroke="#c6c6c6" stroke-width="1.5"/>
<circle cx="459.4" cy="262.4" r="1.5" fill="none" stroke="#c6c6c6" stroke-width="1.3"/>
<path d="M454.100 283.8 C456.600 279.4 462.200 279.4 464.700 283.8 C462.200 288.1 456.600 288.1 454.100 283.8 Z" fill="none" stroke="#c6c6c6" stroke-width="1.5"/>
<circle cx="459.4" cy="283.6" r="1.5" fill="none" stroke="#c6c6c6" stroke-width="1.3"/>
<path d="M630.1 273.0V295.1" stroke="#676767" stroke-width="1.5"/>
<path d="M632.800 280.2v9l5.800-4.500z" fill="#d6d6d6"/>
<path d="M454.100 305.9 C456.600 301.6 462.200 301.6 464.700 305.9 C462.200 310.2 456.600 310.2 454.100 305.9 Z" fill="none" stroke="#c6c6c6" stroke-width="1.5"/>
<circle cx="459.4" cy="305.7" r="1.5" fill="none" stroke="#c6c6c6" stroke-width="1.3"/>
<path d="M630.1 295.1V317.2" stroke="#676767" stroke-width="1.5"/>
<path d="M632.800 302.4v9l5.800-4.500z" fill="#d6d6d6"/>
<path d="M454.100 327.9 C456.600 323.6 462.200 323.6 464.700 327.9 C462.200 332.2 456.600 332.2 454.100 327.9 Z" fill="none" stroke="#c6c6c6" stroke-width="1.5"/>
<circle cx="459.4" cy="327.8" r="1.5" fill="none" stroke="#c6c6c6" stroke-width="1.3"/>
<path d="M630.1 317.2V339.3" stroke="#676767" stroke-width="1.5"/>
<path d="M632.800 324.4v9l5.800-4.500z" fill="#d6d6d6"/>
<path d="M454.100 350.1 C456.600 345.8 462.200 345.8 464.700 350.1 C462.200 354.4 456.600 354.4 454.100 350.1 Z" fill="none" stroke="#c6c6c6" stroke-width="1.5"/>
<circle cx="459.4" cy="349.9" r="1.5" fill="none" stroke="#c6c6c6" stroke-width="1.3"/>
<path d="M630.1 339.3V361.4" stroke="#676767" stroke-width="1.5"/>
<path d="M632.800 346.6v9l5.800-4.500z" fill="#d6d6d6"/>
<path d="M454.100 372.2 C456.600 367.9 462.200 367.9 464.700 372.2 C462.200 376.5 456.600 376.5 454.100 372.2 Z" fill="none" stroke="#c6c6c6" stroke-width="1.5"/>
<circle cx="459.4" cy="372.0" r="1.5" fill="none" stroke="#c6c6c6" stroke-width="1.3"/>
<path d="M630.1 361.4V383.5" stroke="#676767" stroke-width="1.5"/>
<path d="M632.800 368.7v9l5.800-4.500z" fill="#d6d6d6"/>
<path d="M454.100 394.2 C456.600 389.9 462.200 389.9 464.700 394.2 C462.200 398.6 456.600 398.6 454.100 394.2 Z" fill="none" stroke="#c6c6c6" stroke-width="1.5"/>
<circle cx="459.4" cy="394.1" r="1.5" fill="none" stroke="#c6c6c6" stroke-width="1.3"/>
<path d="M454.100 416.4 C456.600 412.1 462.200 412.1 464.700 416.4 C462.200 420.7 456.600 420.7 454.100 416.4 Z" fill="none" stroke="#c6c6c6" stroke-width="1.5"/>
<circle cx="459.4" cy="416.2" r="1.5" fill="none" stroke="#c6c6c6" stroke-width="1.3"/>
<path d="M630.1 405.6V427.8" stroke="#676767" stroke-width="1.5"/>
<path d="M632.800 412.9v9l5.800-4.500z" fill="#d6d6d6"/>
<path d="M454.100 438.6 C456.600 434.3 462.200 434.3 464.700 438.6 C462.200 442.9 456.600 442.9 454.100 438.6 Z" fill="none" stroke="#c6c6c6" stroke-width="1.5"/>
<circle cx="459.4" cy="438.4" r="1.5" fill="none" stroke="#c6c6c6" stroke-width="1.3"/>
<path d="M454.100 460.8 C456.600 456.4 462.200 456.4 464.700 460.8 C462.200 465.1 456.600 465.1 454.100 460.8 Z" fill="none" stroke="#c6c6c6" stroke-width="1.5"/>
<circle cx="459.4" cy="460.6" r="1.5" fill="none" stroke="#c6c6c6" stroke-width="1.3"/>
<path d="M630.1 450.0V472.1" stroke="#676767" stroke-width="1.5"/>
<path d="M632.800 457.2v9l5.800-4.500z" fill="#d6d6d6"/>
<text x="480.100" y="266.200" text-anchor="middle" font-family='"Liberation Serif","DejaVu Serif",serif' font-size="11.500" fill="#444">T</text>
<g fill="none" stroke="#d0d0d0" stroke-width="1.500"><rect x="515.300" y="479.600" width="5.600" height="4.600" rx="2.300"/><rect x="521" y="479.600" width="5.600" height="4.600" rx="2.300"/></g><path d="M518.500 481.900h5" stroke="#d0d0d0" stroke-width="1.400"/>
<rect x="549.800" y="478.600" width="12.200" height="7.600" fill="#d0d0d0"/><ellipse cx="555.900" cy="482.400" rx="3.200" ry="2.400" fill="#474747"/>
<circle cx="573.800" cy="482.400" r="5.500" fill="none" stroke="#d0d0d0" stroke-width="1.200"/><path d="M573.800 476.900a5.500 5.500 0 0 0 0 11z" fill="#d0d0d0"/>
<path d="M586 479.400h4.400l1.200 1.200h6.600v5.800h-12.200z" fill="#d0d0d0"/>
<path d="M604 477.200h11v10.400h-6.200l-4.800-4.400z" fill="none" stroke="#d0d0d0" stroke-width="1.200"/><path d="M604.200 483h4.600v4.400" fill="none" stroke="#d0d0d0" stroke-width="1"/>
<path d="M622.400 479.600h11l-1.200 8.200h-8.600z" fill="#d0d0d0"/><ellipse cx="627.900" cy="478.600" rx="5.800" ry="1.500" fill="#d0d0d0" stroke="#474747" stroke-width=".6"/>
<path d="M756.600 38.0l3.400 3.700l-3.400 3.700" fill="none" stroke="#111" stroke-width="1.700"/>
<path d="M756.600 88.2l3.400 3.700l-3.400 3.700" fill="none" stroke="#111" stroke-width="1.700"/>
<path d="M756.600 138.3l3.400 3.700l-3.400 3.700" fill="none" stroke="#111" stroke-width="1.700"/>
<path d="M756.600 189.8l3.400 3.700l-3.400 3.700" fill="none" stroke="#111" stroke-width="1.700"/>
<path d="M756.600 239.9l3.400 3.700l-3.400 3.700" fill="none" stroke="#111" stroke-width="1.700"/>
<path d="M756.600 290.3l3.400 3.700l-3.400 3.700" fill="none" stroke="#111" stroke-width="1.700"/>
<path d="M756.600 341.1l3.400 3.700l-3.400 3.700" fill="none" stroke="#111" stroke-width="1.700"/>
<path d="M756.600 391.3l3.400 3.700l-3.400 3.700" fill="none" stroke="#111" stroke-width="1.700"/>
<g fill="none" stroke="#2bb4e6" stroke-width="1.100"><path d="M756.400 12.800Q762 7.600 767.600 12.800Q762 18 756.400 12.800Z"/><circle cx="762" cy="12.800" r="1.700"/><path d="M757.800 16.800L766.400 8.600"/></g>
<rect x="482.400" y="286.800" width="2.600" height="1.600" rx=".6" fill="#444"/>
</svg>
</body></html>
